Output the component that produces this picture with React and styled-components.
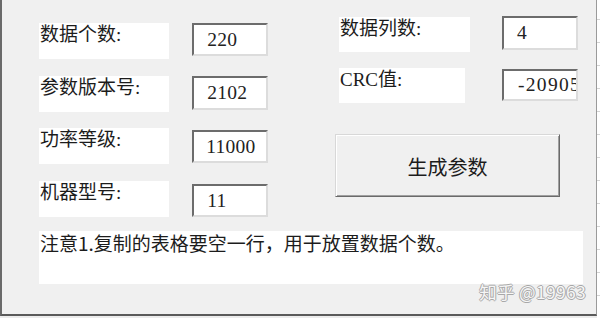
import React from "react";
import styled, { createGlobalStyle } from "styled-components";

const Global = createGlobalStyle`
  html, body { margin: 0; padding: 0; background: #f0f0f0; }
  body { width: 600px; height: 318px; overflow: hidden; }
`;

const Page = styled.div`
  display: flex;
  width: 600px;
  height: 318px;
  background: #ececec;
`;

const Form = styled.div`
  box-sizing: border-box;
  width: 597px;
  height: 316px;
  background: #f0f0f0;
  border-left: 2px solid #6a6a6a;
  border-right: 1px solid #9a9a9a;
  border-bottom: 2px solid #5a5a5a;
  padding-left: 37px;
  display: flex;
  flex-direction: column;
  position: relative;
`;

const Sheet = styled.div`
  flex: 1;
  height: 318px;
  background-color: #ffffff;
  background-image: repeating-linear-gradient(
    to bottom,
    transparent 0px,
    transparent 19px,
    #d4d4d4 19px,
    #d4d4d4 20px,
    transparent 20px,
    transparent 23px
  );
`;

const Top = styled.div`
  display: flex;
  align-items: flex-start;
`;

const LeftCol = styled.div`
  margin-top: 23px;
  width: 229px;
  display: flex;
  flex-direction: column;
  gap: 16.5px;
`;

const LeftRow = styled.div`
  display: flex;
  align-items: flex-start;
  height: 36px;
  gap: 23px;
`;

const RightCol = styled.div`
  margin-left: 67px;
  display: flex;
  flex-direction: column;
`;

const RightRow = styled.div`
  display: grid;
  grid-template-columns: 163px 76px;
  align-items: start;
  margin-left: 4px;
  margin-top: ${(p) => p.$top}px;
  height: 36px;
`;

const Label = styled.div`
  box-sizing: border-box;
  width: ${(p) => p.$w || 131}px;
  height: ${(p) => p.$h || 36}px;
  margin-top: ${(p) => p.$dy || 0}px;
  background: #ffffff;
  padding: 1px 0 0 1px;
  font-family: "Liberation Serif", "Noto Sans CJK SC", serif;
  font-size: 19px;
  line-height: 22px;
  color: #1c1c1c;
  white-space: nowrap;
`;

const TextBox = styled.div`
  box-sizing: border-box;
  width: 76px;
  height: ${(p) => p.$h || 33}px;
  margin-top: ${(p) => p.$dy || 0}px;
  background: #ffffff;
  border-top: 2px solid #6c6c6c;
  border-left: 2px solid #6c6c6c;
  border-bottom: 2px solid #dcdcdc;
  border-right: 2px solid #dcdcdc;
  padding-left: ${(p) => p.$pad || 13}px;
  font-family: "Liberation Serif", serif;
  font-size: 19.5px;
  letter-spacing: ${(p) => p.$ls || 0.2}px;
  line-height: ${(p) => (p.$h || 33) - 4}px;
  color: #222;
  white-space: nowrap;
  overflow: hidden;
`;

const Button = styled.div`
  box-sizing: border-box;
  width: 225px;
  height: 63px;
  margin-top: 30px;
  background: #f0f0f0;
  border-top: 1px solid #d8d8d8;
  border-left: 1px solid #d8d8d8;
  border-bottom: 1px solid #6a6a6a;
  border-right: 1px solid #6a6a6a;
  box-shadow: inset 1px 1px 0 #ffffff, inset -1px -1px 0 #a0a0a0;
  display: flex;
  align-items: center;
  justify-content: center;
  font-family: "Noto Sans CJK SC", sans-serif;
  font-size: 20px;
  color: #1c1c1c;
  padding-top: 2px;
`;

const Note = styled.div`
  box-sizing: border-box;
  width: 544px;
  height: 53px;
  margin-top: 14.5px;
  background: #ffffff;
  padding: 1px 0 0 1px;
  font-family: "Noto Sans CJK SC", sans-serif;
  font-size: 19px;
  line-height: 22px;
  color: #1c1c1c;
  white-space: nowrap;
`;

const Watermark = styled.div`
  position: absolute;
  right: 10px;
  bottom: 12px;
  font-family: "Noto Sans CJK SC", sans-serif;
  font-size: 17.5px;
  line-height: 20px;
  color: #f6f6f6;
  text-shadow: 1px 0 0 #a8a8a8, -1px 0 0 #a8a8a8, 0 1px 0 #a8a8a8, 0 -1px 0 #a8a8a8;
  letter-spacing: 0.3px;
`;

const leftRows = [
  { label: "数据个数:", value: "220", h: 33, dy: 0 },
  { label: "参数版本号:", value: "2102", h: 34, dy: 0 },
  { label: "功率等级:", value: "11000", h: 33, dy: 2, pad: 12 },
  { label: "机器型号:", value: "11", h: 33, dy: 3 },
];

export default function App() {
  return (
    <>
      <Global />
      <Page>
        <Form>
          <Top>
            <LeftCol>
              {leftRows.map((r) => (
                <LeftRow key={r.label}>
                  <Label>{r.label}</Label>
                  <TextBox $h={r.h} $dy={r.dy} $pad={r.pad}>
                    {r.value}
                  </TextBox>
                </LeftRow>
              ))}
            </LeftCol>
            <RightCol>
              <RightRow $top={16}>
                <Label $dy={1} $h={35}>数据列数:</Label>
                <TextBox $h={34}>4</TextBox>
              </RightRow>
              <RightRow $top={16}>
                <Label $w={126} $dy={0} $h={35}>CRC值:</Label>
                <TextBox $h={32} $dy={1} $pad={14} $ls={1.3}>-20905</TextBox>
              </RightRow>
              <Button>生成参数</Button>
            </RightCol>
          </Top>
          <Note>注意1.复制的表格要空一行，用于放置数据个数。</Note>
          <Watermark>知乎 @19963</Watermark>
        </Form>
        <Sheet />
      </Page>
    </>
  );
}
